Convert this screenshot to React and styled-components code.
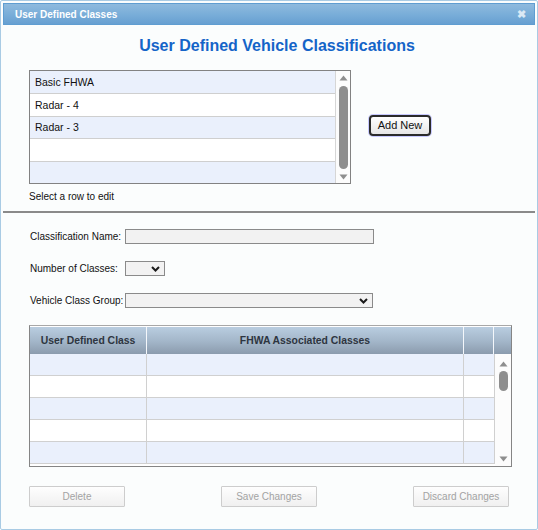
import styled, { createGlobalStyle } from 'styled-components';

const GlobalStyle = createGlobalStyle`
  html, body {
    margin: 0;
    padding: 0;
    background: #ffffff;
  }
  body {
    font-family: "Liberation Sans", Arial, sans-serif;
    font-size: 10px;
    color: #222;
  }
`;

const Dialog = styled.div`
  box-sizing: border-box;
  width: 538px;
  height: 530px;
  border: 1px solid #a9cbe4;
  border-radius: 2px;
  padding: 2px;
  background: #fbfdfd;
  display: flex;
  flex-direction: column;
  overflow: hidden;

  & > * {
    flex-shrink: 0;
  }
`;

const TitleBar = styled.div`
  box-sizing: border-box;
  height: 22px;
  border: 1px solid #5f9dd1;
  background: linear-gradient(#8fbade, #7aaed9 50%, #679fd1);
  color: #fff;
  font-weight: bold;
  font-size: 10px;
  display: flex;
  align-items: center;
  justify-content: space-between;
  padding: 0 8px 0 11px;
`;

const CloseButton = styled.span`
  color: #dbe9f5;
  font-size: 11px;
  font-weight: bold;
  line-height: 1;
`;

const Heading = styled.h1`
  margin: 10px 0 0;
  padding-left: 16px;
  text-align: center;
  color: #1464c8;
  font-size: 16px;
  font-weight: bold;
  line-height: 22px;
`;

const TopSection = styled.div`
  padding: 13px 0 0 26px;
`;

const ListRow = styled.div`
  display: flex;
  align-items: center;
  gap: 18px;
`;

const ListBox = styled.div`
  box-sizing: border-box;
  width: 322px;
  height: 114px;
  border: 1px solid #828282;
  display: flex;
  background: #fff;
`;

const Rows = styled.div`
  flex: 1;
  display: flex;
  flex-direction: column;
`;

const ListItem = styled.div`
  box-sizing: border-box;
  height: ${({ $last }) => ($last ? '21px' : '23px')};
  border-bottom: ${({ $last }) => ($last ? 'none' : '1px solid #cfcfcf')};
  background: ${({ $alt }) => ($alt ? '#eaf0fc' : '#ffffff')};
  padding-left: 5px;
  display: flex;
  align-items: center;
  font-size: 10.5px;
  color: #111;
`;

const Scrollbar = styled.div`
  width: 15px;
  border-left: 1px solid #d6d6d6;
  background: #fcfcfc;
  display: flex;
  flex-direction: column;
  align-items: center;
  justify-content: space-between;
  padding: 4px 0 3px;
  box-sizing: border-box;
`;

const Thumb = styled.div`
  width: 9px;
  flex: ${({ $size }) => ($size ? 'none' : '1')};
  height: ${({ $size }) => ($size ? `${$size}px` : 'auto')};
  margin: ${({ $gap }) => $gap};
  border-radius: 5px;
  background: #8e8e8e;
`;

const Arrow = styled.svg`
  width: 9px;
  height: 6px;
  display: block;
`;

const AddButton = styled.button`
  box-sizing: border-box;
  width: 62px;
  height: 21px;
  padding: 0;
  border: 2px solid #2b2b2b;
  border-radius: 4px;
  background: linear-gradient(#ffffff, #e6e6e6);
  box-shadow: 0 0 0 1px #c7c9ff;
  font-family: "Liberation Sans", Arial, sans-serif;
  font-size: 11px;
  color: #111;
  margin-top: -4px;
`;

const Hint = styled.div`
  margin-top: 6px;
  font-size: 10px;
  line-height: 13px;
  color: #111;
`;

const Separator = styled.hr`
  margin: 8px 0 0;
  border: none;
  height: 2px;
  background: #8a8a8a;
`;

const Form = styled.div`
  padding: 16px 0 0 27px;
  display: flex;
  flex-direction: column;
  gap: 17px;
`;

const FormRow = styled.div`
  display: grid;
  grid-template-columns: 95px auto;
  align-items: center;
`;

const Label = styled.label`
  font-size: 10px;
  color: #111;
  white-space: nowrap;
`;

const TextInput = styled.div`
  box-sizing: border-box;
  width: ${({ $width }) => $width}px;
  height: 15px;
  border: 1px solid #8a8a8a;
  background: #f2f2f2;
  display: flex;
  align-items: center;
  justify-content: flex-end;
  padding-right: 4px;
`;

const Chevron = styled.svg`
  width: 9px;
  height: 6px;
  display: block;
`;

const Grid = styled.div`
  box-sizing: border-box;
  margin: 17px 0 0 26px;
  width: 483px;
  height: 142px;
  border: 1px solid #858585;
  border-top-color: #a8a8a8;
  display: flex;
  flex-direction: column;
  background: #fff;
`;

const GridHead = styled.div`
  display: grid;
  grid-template-columns: 117px 317px 30px 1fr;
  height: 27px;
  flex: none;
  background: linear-gradient(#b9cde0, #a2b5c8 55%, #8b9bad);
  border-top: 1px solid #fff;
`;

const HeadCell = styled.div`
  display: flex;
  align-items: center;
  justify-content: center;
  font-weight: bold;
  font-size: 10.4px;
  color: #2e3540;
  border-right: 1px solid #f4f7fb;

  &:last-child {
    border-right: none;
  }
`;

const GridBody = styled.div`
  flex: 1;
  display: flex;
  min-height: 0;
`;

const GridRows = styled.div`
  flex: 1;
  display: flex;
  flex-direction: column;
  overflow: hidden;
`;

const GridRow = styled.div`
  display: grid;
  grid-template-columns: 117px 317px 1fr;
  box-sizing: border-box;
  height: 22px;
  flex: none;
  background: ${({ $alt }) => ($alt ? '#eaf0fc' : '#ffffff')};
  border-bottom: 1px solid #d0d0d0;
`;

const GridCell = styled.div`
  border-right: 1px solid #d0d0d0;
`;

const GridScroll = styled(Scrollbar)`
  width: 16px;
  border-left: none;
  padding: 7px 0 4px;
  justify-content: flex-start;
`;

const Spacer = styled.div`
  flex: 1;
`;

const Footer = styled.div`
  display: flex;
  justify-content: space-between;
  padding: 19px 0 0 26px;
  width: 480px;
`;

const ActionButton = styled.button`
  box-sizing: border-box;
  width: 96px;
  height: 21px;
  border: 1px solid #cdcdcd;
  border-radius: 1px;
  background: linear-gradient(#fefefe, #f0f0f0);
  color: #a3a3a3;
  font-family: "Liberation Sans", Arial, sans-serif;
  font-size: 10px;
  padding: 0;
`;

const UpArrow = () => (
  <Arrow viewBox="0 0 9 6">
    <path d="M4.5 0.5 L8.5 5.5 L0.5 5.5 Z" fill="#8e8e8e" />
  </Arrow>
);

const DownArrow = () => (
  <Arrow viewBox="0 0 9 6">
    <path d="M0.5 0.5 L8.5 0.5 L4.5 5.5 Z" fill="#8e8e8e" />
  </Arrow>
);

const SelectChevron = () => (
  <Chevron viewBox="0 0 9 6">
    <path d="M1 1 L4.5 4.5 L8 1" fill="none" stroke="#1a1a1a" strokeWidth="2" />
  </Chevron>
);

const classes = ['Basic FHWA', 'Radar - 4', 'Radar - 3', '', ''];

const App = () => {
  return (
    <>
      <GlobalStyle />
      <Dialog>
        <TitleBar>
          <span>User Defined Classes</span>
          <CloseButton>✖</CloseButton>
        </TitleBar>
        <Heading>User Defined Vehicle Classifications</Heading>

        <TopSection>
          <ListRow>
            <ListBox>
              <Rows>
                {classes.map((name, i) => (
                  <ListItem key={i} $alt={i % 2 === 0} $last={i === classes.length - 1}>
                    {name}
                  </ListItem>
                ))}
              </Rows>
              <Scrollbar>
                <UpArrow />
                <Thumb $gap="5px 0" />
                <DownArrow />
              </Scrollbar>
            </ListBox>
            <AddButton>Add New</AddButton>
          </ListRow>
          <Hint>Select a row to edit</Hint>
        </TopSection>

        <Separator />

        <Form>
          <FormRow>
            <Label>Classification Name:</Label>
            <TextInput $width={249} />
          </FormRow>
          <FormRow>
            <Label>Number of Classes:</Label>
            <TextInput $width={40}>
              <SelectChevron />
            </TextInput>
          </FormRow>
          <FormRow>
            <Label>Vehicle Class Group:</Label>
            <TextInput $width={248}>
              <SelectChevron />
            </TextInput>
          </FormRow>
        </Form>

        <Grid>
          <GridHead>
            <HeadCell>User Defined Class</HeadCell>
            <HeadCell>FHWA Associated Classes</HeadCell>
            <HeadCell />
            <HeadCell />
          </GridHead>
          <GridBody>
            <GridRows>
              {[0, 1, 2, 3, 4].map((i) => (
                <GridRow key={i} $alt={i % 2 === 0}>
                  <GridCell />
                  <GridCell />
                  <GridCell />
                </GridRow>
              ))}
            </GridRows>
            <GridScroll>
              <UpArrow />
              <Thumb $size={20} $gap="4px 0 0" />
              <Spacer />
              <DownArrow />
            </GridScroll>
          </GridBody>
        </Grid>

        <Footer>
          <ActionButton disabled>Delete</ActionButton>
          <ActionButton disabled>Save Changes</ActionButton>
          <ActionButton disabled>Discard Changes</ActionButton>
        </Footer>
      </Dialog>
    </>
  );
};

export default App;
